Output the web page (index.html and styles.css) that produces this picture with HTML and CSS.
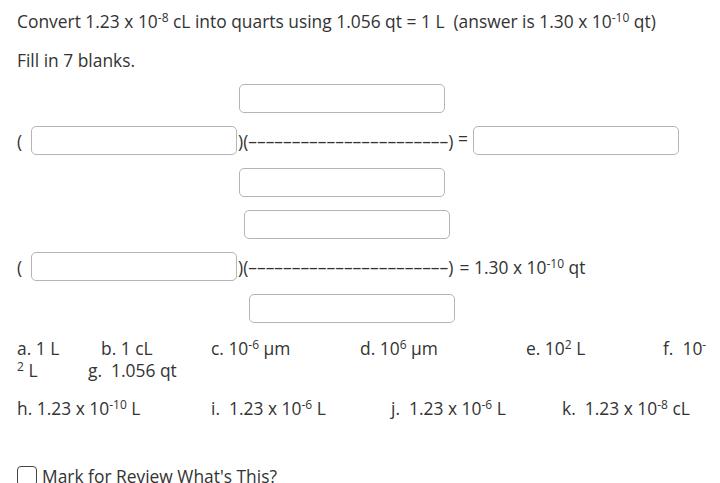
FILE: index.html
```html
<!DOCTYPE html>
<html lang="en">
<head>
  <meta charset="UTF-8">
  <meta name="viewport" content="width=device-width, initial-scale=1.0">
  <title>Quiz Question</title>
  <link rel="stylesheet" href="styles.css">
</head>
<body>

<div class="question">
  <p class="prompt">Convert 1.23 x 10<sup>-8</sup> cL into quarts using 1.056 qt = 1 L&nbsp; (answer is 1.30 x 10<sup>-10</sup> qt)</p>
  <p class="prompt fill">Fill in 7 blanks.</p>

  <div class="group">
    <input type="text" class="blank num a1">
    <span class="paren">(</span>
    <input type="text" class="blank lead">
    <span class="bar">)(&ndash;&ndash;&ndash;&ndash;&ndash;&ndash;&ndash;&ndash;&ndash;&ndash;&ndash;&ndash;&ndash;&ndash;&ndash;&ndash;&ndash;&ndash;&ndash;&ndash;&ndash;&ndash;&ndash;)</span>
    <span class="result">&nbsp;=<input type="text" class="blank answer"></span>
    <input type="text" class="blank den a1">
  </div>

  <div class="group">
    <input type="text" class="blank num a2">
    <span class="paren">(</span>
    <input type="text" class="blank lead">
    <span class="bar">)(&ndash;&ndash;&ndash;&ndash;&ndash;&ndash;&ndash;&ndash;&ndash;&ndash;&ndash;&ndash;&ndash;&ndash;&ndash;&ndash;&ndash;&ndash;&ndash;&ndash;&ndash;&ndash;&ndash;)</span>
    <span class="result">&nbsp;= 1.30 x 10<sup>-10</sup> qt</span>
    <input type="text" class="blank den b2">
  </div>

  <div class="choices">
    <div class="line">
      <span class="opt w84">a. 1 L</span><span class="opt w110">b. 1 cL</span><span class="opt w149">c. 10<sup>-6</sup> &micro;m</span><span class="opt w166">d. 10<sup>6</sup> &micro;m</span><span class="opt w137">e. 10<sup>2</sup> L</span><span class="opt">f.&nbsp; 10<sup>-</sup></span>
    </div>
    <div class="line">
      <span class="opt w71"><sup>2</sup> L</span><span class="opt">g.&nbsp; 1.056 qt</span>
    </div>
    <div class="line spaced">
      <span class="opt w194">h. 1.23 x 10<sup>-10</sup> L</span><span class="opt w180">i.&nbsp; 1.23 x 10<sup>-6</sup> L</span><span class="opt w171">j.&nbsp; 1.23 x 10<sup>-6</sup> L</span><span class="opt">k.&nbsp; 1.23 x 10<sup>-8</sup> cL</span>
    </div>
  </div>

  <label class="review">
    <input type="checkbox" class="review-box">
    <span>Mark for Review What's This?</span>
  </label>
</div>

</body>
</html>
```

FILE: styles.css
```css
/* Página da pergunta */
body {
  margin: 0;
  padding: 10px 17px 0;
  background: #fff;
  color: #333;
  font-family: "Open Sans", "Liberation Sans", sans-serif;
  font-size: 17.4px;
  line-height: 22px;
}
sup {
  font-size: 12px;
  line-height: 0;
  vertical-align: 6px;
}
.prompt {
  margin: 0;
}
.fill {
  margin-top: 17px;
  margin-bottom: 13px;
}

/* Bloco da fração */
.group {
  display: grid;
  grid-template-columns: 14px 206px auto 1fr;
  grid-template-rows: 29px 29px 29px;
  row-gap: 13px;
  align-items: center;
  margin-bottom: 13px;
}
.blank {
  width: 206px;
  height: 29px;
  box-sizing: border-box;
  margin: 0;
  padding: 4px 8px;
  border: 1px solid #b5b5b5;
  border-radius: 5px;
  background: #fff;
  font: inherit;
}
.num {
  grid-column: 3;
  grid-row: 1;
  justify-self: start;
}
.den {
  grid-column: 3;
  grid-row: 3;
  justify-self: start;
}
.a1 { margin-left: 2px; }
.a2 { margin-left: 7px; }
.b2 { margin-left: 12px; }
.paren {
  grid-column: 1;
  grid-row: 2;
}
.lead {
  grid-column: 2;
  grid-row: 2;
}
.bar {
  grid-column: 3;
  grid-row: 2;
  padding-left: 1px;
  white-space: nowrap;
}
.result {
  grid-column: 4;
  grid-row: 2;
  white-space: nowrap;
}
.answer {
  margin-left: 5px;
  vertical-align: middle;
}

/* Opções */
.choices {
  margin-top: 14px;
}
.line {
  white-space: nowrap;
}
.spaced {
  margin-top: 16px;
}
.opt {
  display: inline-block;
}
.w71 { width: 71px; }
.w84 { width: 84px; }
.w110 { width: 110px; }
.w137 { width: 137px; }
.w149 { width: 149px; }
.w166 { width: 166px; }
.w171 { width: 171px; }
.w180 { width: 180px; }
.w194 { width: 194px; }

/* Marcar para revisão */
.review {
  display: flex;
  align-items: center;
  margin-top: 46px;
}
.review-box {
  appearance: none;
  width: 20px;
  height: 20px;
  margin: 0 5px 0 0;
  border: 1px solid #444;
  border-radius: 4px;
  background: #fff;
}
```
